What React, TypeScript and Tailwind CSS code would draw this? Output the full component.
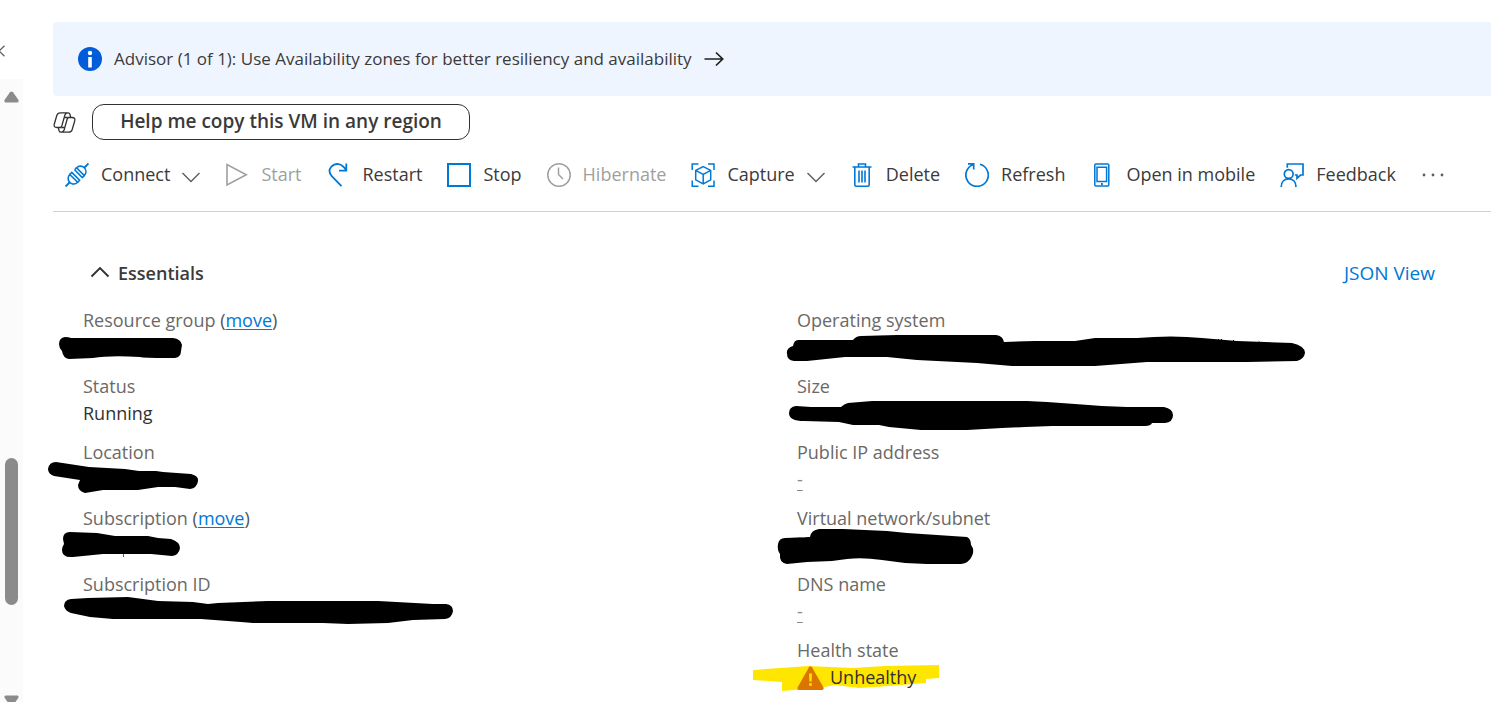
import type { ReactNode } from 'react';

const BLUE = '#0078d4';
const GRAY = '#a19f9d';

function Icon({ color = BLUE, width = 1.6, children }: { color?: string; width?: number; children: ReactNode }) {
  return (
    <svg className="w-6 h-6 shrink-0" viewBox="0 0 24 24" fill="none" stroke={color} strokeWidth={width} aria-hidden="true">
      {children}
    </svg>
  );
}

function ChevronDown() {
  return (
    <svg className="w-[18px] h-6 shrink-0" viewBox="0 0 18 24" fill="none" stroke="#605e5c" strokeWidth="1.4" aria-hidden="true">
      <path d="M0.500 10 9 18.500l8.500-8.500" />
    </svg>
  );
}

const commands = [
  {
    label: 'Connect',
    menu: true,
    icon: (
      <Icon>
        <path d="M0.500 23.500 5 19M19 5l4.500-4.500" strokeWidth="1.900" />
        <path d="M4.800 11.500 12.600 19.200C10.500 21.500 7 21.800 4.800 19.500S2.600 13.700 4.800 11.500Z" />
        <path d="M11.600 4.700 19.300 12.500C21.500 10.200 21.500 7 19.300 4.800S13.700 2.600 11.600 4.700Z" />
        <path d="M4.800 11.500 6.800 9.500 14.600 17.200 12.600 19.200M9.600 6.700 11.600 4.700M9.600 6.700 17.300 14.500 19.300 12.500" />
      </Icon>
    ),
  },
  {
    label: 'Start',
    disabled: true,
    icon: (
      <Icon color={GRAY}>
        <path d="M2 1.500V22L21.300 11.700Z" />
      </Icon>
    ),
  },
  {
    label: 'Restart',
    icon: (
      <Icon width={1.8}>
        <path d="M15.500 23.200 6 13.500C2.800 10 2.800 6.500 5.500 3.500C9.500 -0.500 15.500 0 20 7M20.300 0.500V7.600H13" />
      </Icon>
    ),
  },
  {
    label: 'Stop',
    icon: (
      <Icon width={2}>
        <path d="M1 1H23V23H1Z" />
      </Icon>
    ),
  },
  {
    label: 'Hibernate',
    disabled: true,
    icon: (
      <Icon color={GRAY} width={1.5}>
        <circle cx="12" cy="12" r="11.200" />
        <path d="M11.500 4.500V11.500L16 16" />
      </Icon>
    ),
  },
  {
    label: 'Capture',
    menu: true,
    icon: (
      <Icon width={1.5}>
        <path d="M1.200 7V0.900H7.500M17 0.900H23V7M23 17.500V23.200H17M7.500 23.200H1.200V17.500" />
        <path d="M12.200 3.600 19.700 7.400V16.800L12.200 20.800 4.700 16.800V7.400ZM4.700 7.400 12.200 11.400 19.700 7.400M12.200 11.400V20.800" />
      </Icon>
    ),
  },
  {
    label: 'Delete',
    icon: (
      <Icon width={1.6}>
        <path d="M2.500 4H21.500M8.500 4V1H15.500V4M4.800 4V21.800Q4.800 23.200 6.200 23.200H17.800Q19.200 23.200 19.200 21.800V4" />
        <path d="M9 7.500V19.500M12 7.500V19.500M15 7.500V19.500" />
      </Icon>
    ),
  },
  {
    label: 'Refresh',
    icon: (
      <Icon width={1.7}>
        <path d="M15 1.300A11.200 11.200 0 1 1 8.500 1.500M3 0.900H8.700V6.500" />
      </Icon>
    ),
  },
  {
    label: 'Open in mobile',
    icon: (
      <Icon width={1.5}>
        <rect x="4.800" y="1" width="14" height="22" rx="1" />
        <path d="M7 4.300H16.600V18.500H7Z" />
        <path d="M11 21H12.800" strokeWidth="1.800" />
      </Icon>
    ),
  },
  {
    label: 'Feedback',
    icon: (
      <Icon width={1.7}>
        <circle cx="8.700" cy="11" r="4.400" />
        <path d="M1.200 24C1.200 19 4.200 15.800 8.700 15.800S16 19 16 24" />
        <path d="M7.300 4.800V1H23V12H20.500L17 15.200V12H14.800" />
      </Icon>
    ),
  },
];

function Scribble({ d, color = '#000' }: { d: string; color?: string }) {
  return (
    <svg className="absolute left-0 top-0 w-px h-px overflow-visible pointer-events-none" fill={color} aria-hidden="true">
      <path d={d} />
    </svg>
  );
}

function Field({ label, move, children }: { label: string; move?: boolean; children: ReactNode }) {
  return (
    <div className="pb-3">
      <dt className="h-[27px] leading-[27px] text-[#6b6966] whitespace-nowrap">
        {label}
        {move && (
          <>
            {' '}
            <span className="text-[#55534f]">
              (<a href="#" className="text-[#0078d4] underline underline-offset-2">move</a>)
            </span>
          </>
        )}
      </dt>
      <dd className="relative h-[27px] leading-[27px] text-[#323130]">{children}</dd>
    </div>
  );
}

function Empty() {
  return <span className="text-[#8a8886] underline underline-offset-4">-</span>;
}

export default function App() {
  return (
    <div className="flex h-screen overflow-hidden bg-white font-['Open_Sans','Noto_Sans',sans-serif] text-[18px] text-[#3b3a39]">
      {/* Side menu edge with its scrollbar */}
      <aside className="w-[23px] shrink-0 flex flex-col">
        <button type="button" aria-label="Collapse menu" className="h-[79px] shrink-0 pt-[22px] flex items-center">
          <svg className="w-[5px] h-3" viewBox="0 0 5 12" fill="none" stroke="#605e5c" strokeWidth="1.200">
            <path d="M4.500 0.800-1 6l5.500 5.200" />
          </svg>
        </button>
        <div className="grow min-h-0 bg-[#fbfbfb] flex flex-col items-center pt-3">
          <svg className="w-[15px] h-3 shrink-0" viewBox="0 0 15 12" fill="#8b8b8b">
            <path d="M6 1.200Q7.500-0.300 9 1.200L14.500 9Q15 11.500 13 11.500H2Q0 11.500 0.500 9Z" />
          </svg>
          <div className="mt-[355px] w-[13px] h-[147px] shrink-0 rounded-full bg-[#8b8b8b]" />
          <svg className="mt-[90px] w-[15px] h-3 shrink-0" viewBox="0 0 15 12" fill="#8b8b8b">
            <path d="M2 0.500H13Q15 0.500 14.500 2.500L9 10.500Q7.500 12 6 10.500L0.500 2.500Q0 0.500 2 0.500Z" />
          </svg>
        </div>
      </aside>

      <main className="grow min-w-0 ml-[30px] pt-[22px]">
        <div className="h-[74px] rounded-l bg-[#eff5ff] flex items-center pl-[25px]">
          <svg className="w-6 h-6" viewBox="0 0 24 24" aria-hidden="true">
            <circle cx="12" cy="12" r="12" fill="#015cda" />
            <circle cx="12" cy="6" r="2.200" fill="#fff" />
            <path d="M10.200 10H13.800V20.500H10.200Z" fill="#fff" />
          </svg>
          <a href="#" className="ml-3 flex items-center gap-3 text-[17px] whitespace-nowrap">
            Advisor (1 of 1): Use Availability zones for better resiliency and availability
            <svg className="w-5 h-4" viewBox="0 0 20 16" fill="none" stroke="#201f1e" strokeWidth="1.700" aria-hidden="true">
              <path d="M0.500 8H18.500M12 1.500 18.700 8 12 14.500" />
            </svg>
          </a>
        </div>

        <div className="mt-2 flex items-center gap-4">
          <svg className="w-[23px] h-[21px]" viewBox="0 0 23 21" fill="none" stroke="#323130" strokeWidth="1.300" strokeLinejoin="round" aria-hidden="true">
            <path d="M8.500 15.500H4Q0.300 15.500 1.300 12L3.800 3.500Q4.700 0.800 7.200 0.800H15Q16.500 0.800 17 2.500L17.600 5.200M14.800 0.800Q12.600 0.800 11.900 3L8.800 14Q8.300 15.500 6.800 15.500" />
            <path d="M14.500 5.500H19Q22.700 5.500 21.700 9L19.200 17.500Q18.300 20.200 15.800 20.200H8Q6.500 20.200 6 18.500L5.400 15.800M8.200 20.200Q10.400 20.200 11.100 18L14.200 7Q14.700 5.500 16.200 5.500" />
            <path d="M11.500 5.500H14.500M8.500 15.500H11.500" />
          </svg>
          <button type="button" className="h-9 w-[378px] rounded-xl border border-[#323130] pb-0.5 flex items-center justify-center text-[19px] font-semibold whitespace-nowrap">
            Help me copy this VM in any region
          </button>
        </div>

        <div role="toolbar" aria-label="Virtual machine commands" className="h-[72px] pl-3 pb-0.5 flex items-center gap-[25px] border-b border-[#d2d0ce] whitespace-nowrap">
          {commands.map((c) => (
            <button
              key={c.label}
              type="button"
              disabled={c.disabled}
              className="flex items-center gap-3 disabled:text-[#a19f9d]"
            >
              {c.icon}
              {c.label}
              {c.menu && <ChevronDown />}
            </button>
          ))}
          <button type="button" aria-label="More commands">
            <svg className="w-6 h-6" viewBox="0 0 24 24" fill="#605e5c">
              <circle cx="3" cy="12" r="1.400" />
              <circle cx="12" cy="12" r="1.400" />
              <circle cx="21" cy="12" r="1.400" />
            </svg>
          </button>
        </div>

        <div className="mt-[47px] h-7 pl-[37px] pr-14 flex items-center justify-between">
          <button type="button" className="flex items-center gap-2 font-semibold">
            <svg className="w-5 h-5" viewBox="0 0 20 20" fill="none" stroke="#323130" strokeWidth="1.900" aria-hidden="true">
              <path d="M1.500 13.500 10 5l8.500 8.500" />
            </svg>
            Essentials
          </button>
          <a href="#" className="text-[19px] text-[#0078d4]">JSON View</a>
        </div>

        <div className="mt-5 pl-[30px] grid grid-cols-2 gap-5">
          <dl>
            <Field label="Resource group" move>
              <Scribble d="M-24 10Q-24 4-18 3Q-14 3-12 4H90Q98 5 99 11L98 17Q98 23 92 24H85Q60 24 57 23Q27 21 10 24L-14 25Q-20 24-21 17Q-24 14-24 10Z" />
            </Field>
            <Field label="Status">Running</Field>
            <Field label="Location">
              <Scribble d="M-35 3Q-34-4-27-4L6 1L42 3L56 5H73L80 6L108 8Q116 10 115 15Q114 22 107 23L92 21H75L55 24H20L2 27Q-5 25-5 19L-3 14L-29 10Q-35 8-35 3Z" />
            </Field>
            <Field label="Subscription" move>
              <Scribble d="M-20 7Q-20 0-13 0L14 1L32 4H65L75 6L88 7Q97 10 97 16Q96 23 89 24L68 22H20L-10 25Q-21 26-21 18Q-21 15-19 12Z" />
              <Scribble color="#0078d4" d="M40 22H41V25H40Z" />
            </Field>
            <Field label="Subscription ID">
              <Scribble d="M-19 8Q-19 2-12 1L5 0L45-1L75 3L110 4L125 6L135 5L185 3L295 3L350 6H363Q370 7 370 13Q369 20 362 21L330 22L305 25L265 26L240 25H170L158 24L118 21H30L7 19L-12 15Q-18 13-19 8Z" />
            </Field>
          </dl>
          <dl>
            <Field label="Operating system">
              <Scribble d="M-10 20Q-11 14-4 12Q-3 6 1 6H56Q59 2 64 2L100 1H199Q206 2 207 8L238 7H278L298 4L340 4Q375 1 405 4L440 7L495 9Q508 12 508 19Q507 25 500 27L450 28H350L298 32H215L180 29L120 26L90 23H48L10 27H-3Q-10 26-10 20Z" />
              <Scribble d="M421 5H422V8H421ZM424 5H425V8H424ZM436 6H437V9H436ZM461 6L463 9H464L461 6Z" />
            </Field>
            <Field label="Size">
              <Scribble d="M-8 13Q-8 7-1 6L14 7H44Q47 4 51 3L75 1H230L250 2L278 4L305 6L330 7H367Q376 9 376 15Q376 22 368 23H355Q354 26 348 26H255L228 27L205 28L170 30H124L92 27L82 25H56L42 22L7 21Q-8 21-8 13Z" />
            </Field>
            <Field label="Public IP address"><Empty /></Field>
            <Field label="Virtual network/subnet">
              <Scribble d="M-19 12Q-18 6-12 6L13 5Q14-2 22-3H46L90-1L110 1L140 3L170 5Q174 7 174 13Q178 18 175 24Q172 31 164 32H130L108 31L85 28Q65 25 50 27L35 29L10 30L-10 32Q-18 31-17 22Q-20 18-19 12Z" />
              <Scribble color="#0078d4" d="M1 5H8V6H1Z" />
            </Field>
            <Field label="DNS name"><Empty /></Field>
            <Field label="Health state">
              <Scribble color="#ffe600" d="M-44 6L12 2L55 4L88 2L142 1V14L129 15V19L116 20L92 22L62 24L38 21L22 24L-15 27V18L-44 16Z" />
              <span className="relative flex items-center gap-1.5">
                <svg className="w-[27px] h-6" viewBox="0 0 27 24" aria-hidden="true">
                  <path d="M12 1.200Q13.500-0.900 15 1.200L26.500 21.500Q27 23.800 25 24H2Q0 23.800 0.500 21.500Z" fill="#db7500" />
                  <path d="M12 7.500H15L14.600 15.500H12.400ZM12.200 17.200H14.800V19.800H12.200Z" fill="#ffe600" />
                </svg>
                Unhealthy
              </span>
            </Field>
          </dl>
        </div>
      </main>
    </div>
  );
}
